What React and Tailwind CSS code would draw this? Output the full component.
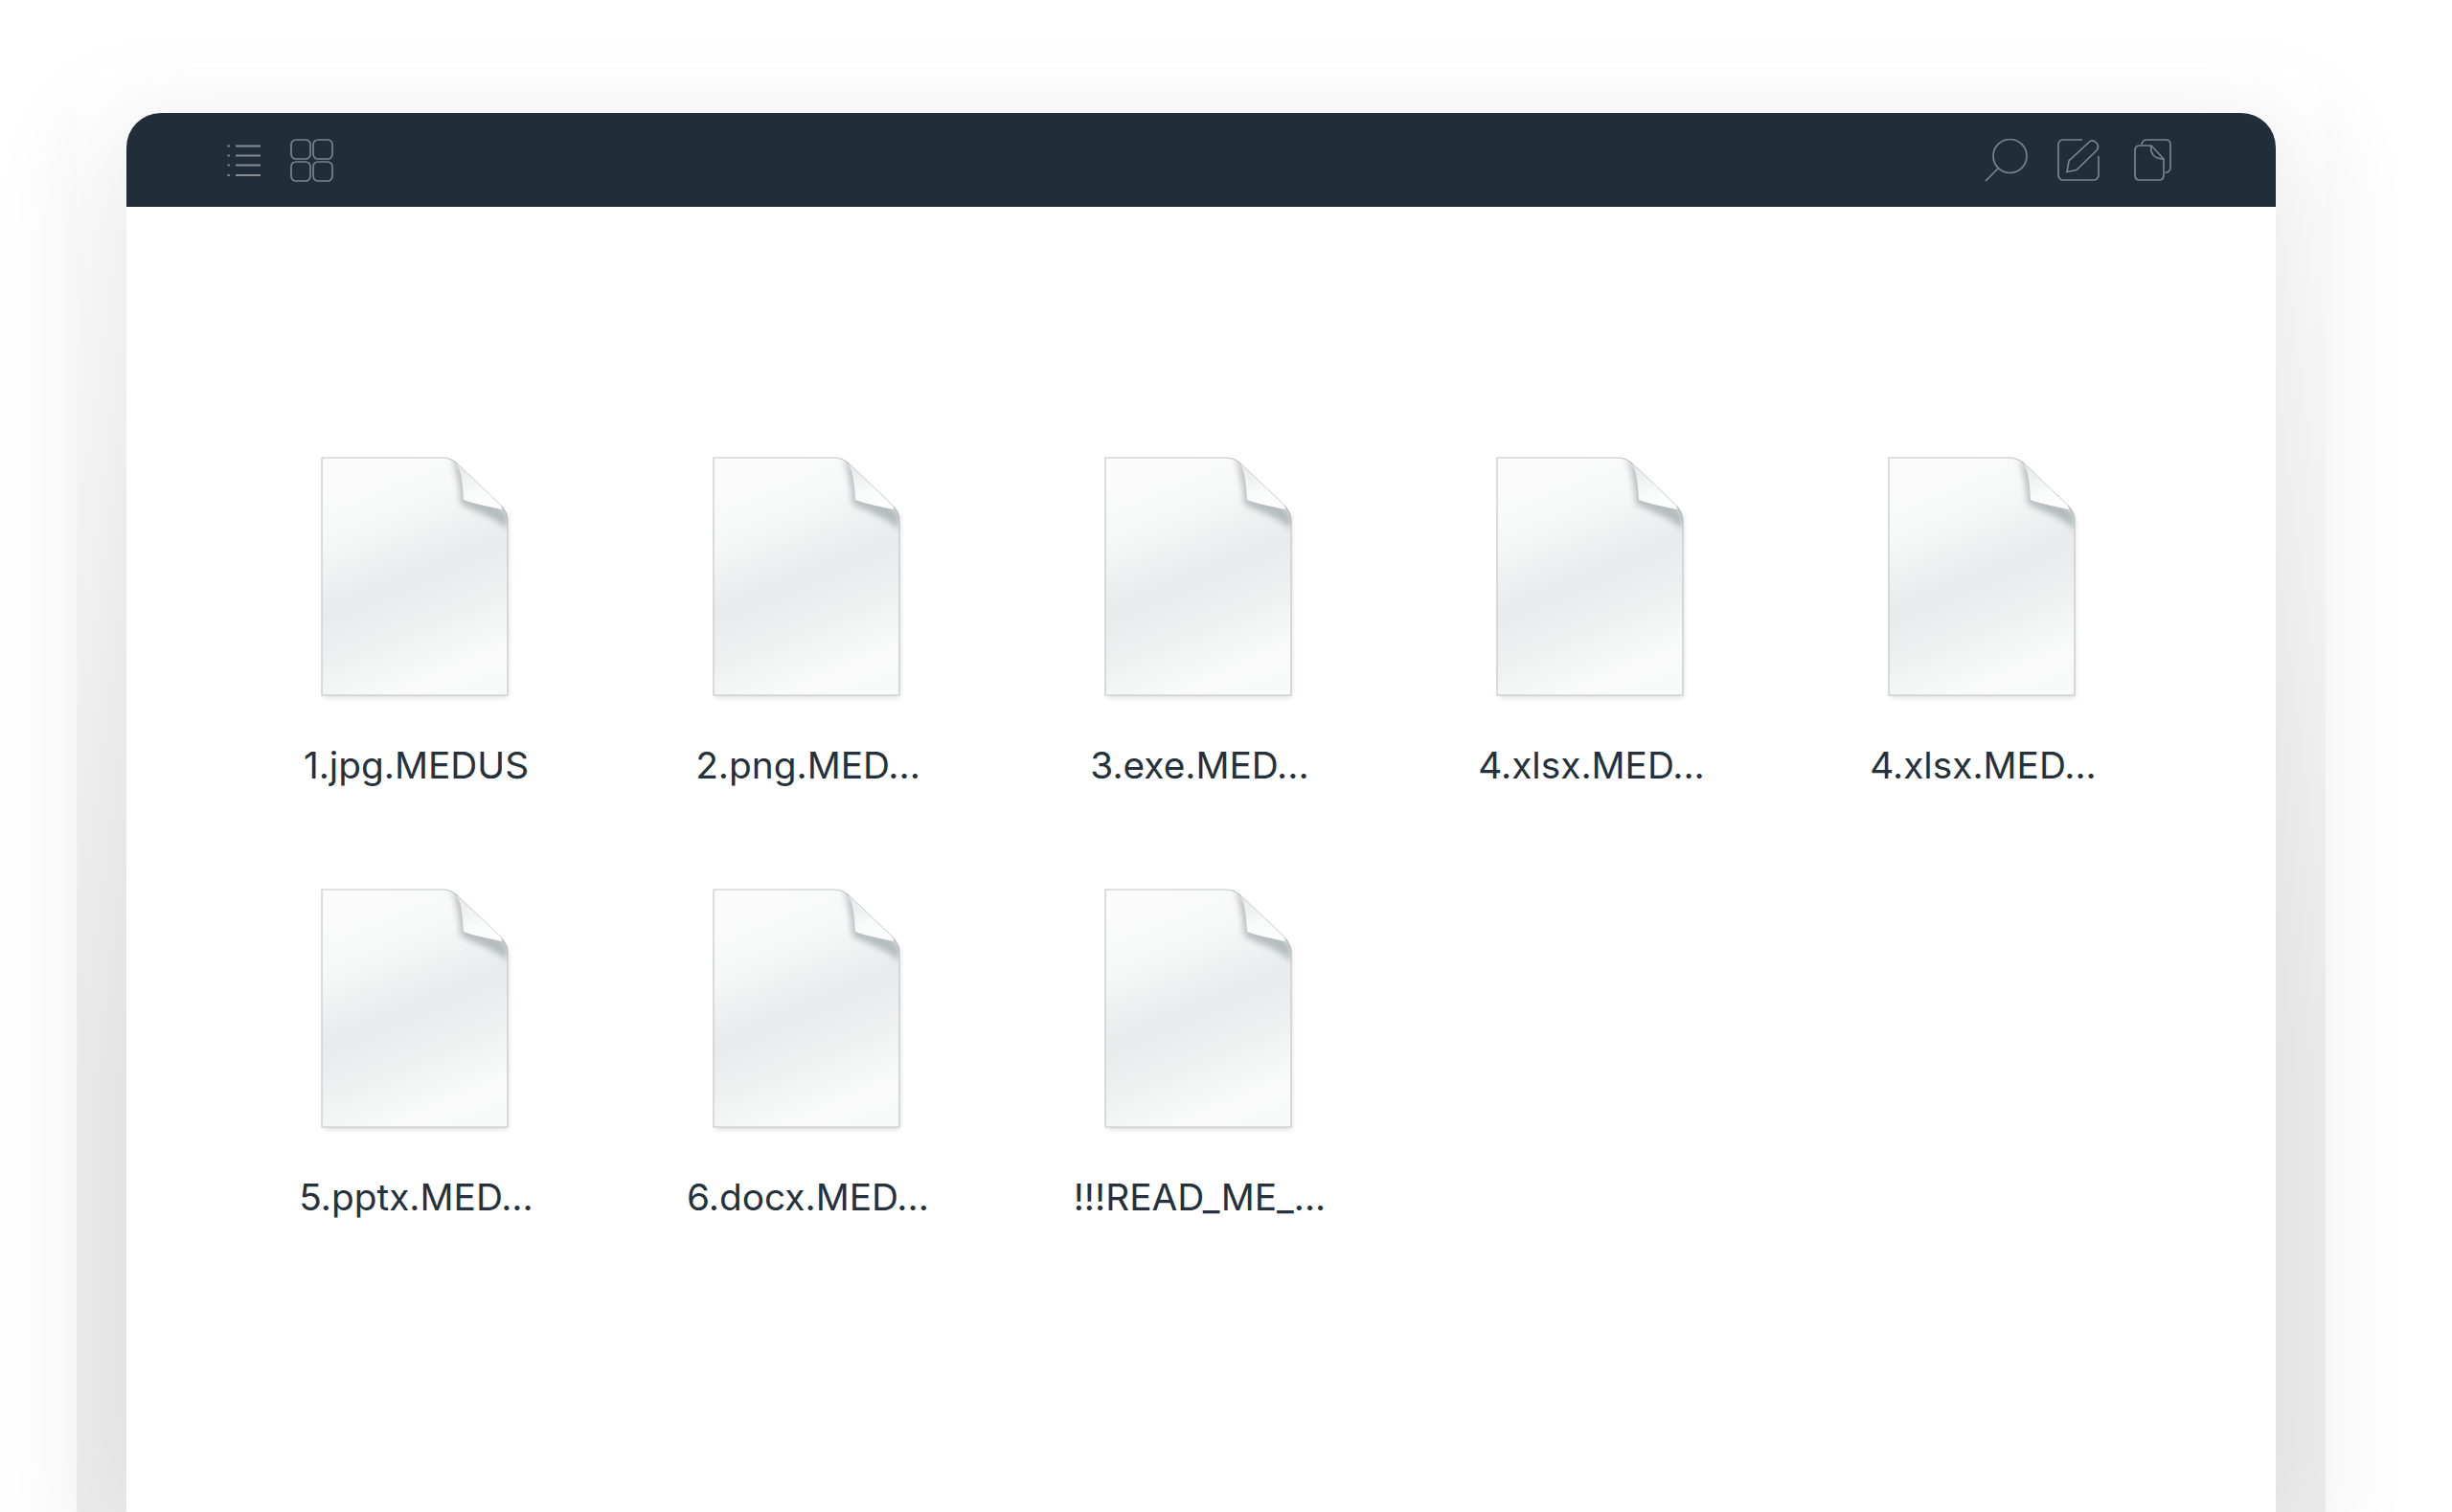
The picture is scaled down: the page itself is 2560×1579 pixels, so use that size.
import React from "react";

const files = ["1.jpg.MEDUS","2.png.MED...","3.exe.MED...","4.xlsx.MED...","4.xlsx.MED...","5.pptx.MED...","6.docx.MED...","!!!READ_ME_..."];

function Doc({ id }) {
  const page = "M1 1H128C134 1 139 4 143 8L187 50C192 55 195 60 195 66V249H1Z";
  return (
    <svg width="200" height="256" viewBox="0 0 200 256" className="block">
      <defs>
        <linearGradient id={`p${id}`} gradientUnits="userSpaceOnUse" x1="49" y1="9" x2="145" y2="241">
          <stop offset="0" stopColor="#fbfbfb" />
          <stop offset="0.25" stopColor="#f6f7f7" />
          <stop offset="0.5" stopColor="#e7ebeb" />
          <stop offset="0.7" stopColor="#eff1f1" />
          <stop offset="0.95" stopColor="#fbfbfb" />
          <stop offset="1" stopColor="#f8f9f9" />
        </linearGradient>
        <linearGradient id={`f${id}`} x1="0.3" y1="0" x2="0.7" y2="1">
          <stop offset="0" stopColor="#e8eaea" />
          <stop offset="0.55" stopColor="#f8f9f9" />
          <stop offset="1" stopColor="#ffffff" />
        </linearGradient>
        <clipPath id={`c${id}`}><path d={page} /></clipPath>
        <filter id={`b${id}`} x="-30%" y="-30%" width="160%" height="160%">
          <feGaussianBlur stdDeviation="3" />
        </filter>
      </defs>
      <path d="M3 60H195V251H3Z" fill="#000" opacity="0.16" filter={`url(#b${id})`} />
      <path d={page} fill={`url(#p${id})`} stroke="#c2c5c5" strokeWidth="1.1" />
      <g clipPath={`url(#c${id})`}>
        <path d="M136 1C142 14 145 32 146 49C158 57 178 60 195 76V60L140 4Z" fill="#8f999d" opacity="0.6" filter={`url(#b${id})`} />
      </g>
      <path d="M142 7L187 50C188 51 189 53 189 55C176 52 162 50 149 45C148 30 147 16 142 7Z" fill={`url(#f${id})`} />
    </svg>
  );
}

const stroke = { fill: "none", stroke: "#7a848b", strokeWidth: 1.7 };

export default function App() {
  return (
    <div className="h-[1579px] overflow-hidden bg-white pl-[80px] pr-[132px] pt-[66px] [font-family:Inter,sans-serif]">
      <div className="h-[1513px] overflow-hidden rounded-t-[52px] bg-[linear-gradient(to_bottom,#ffffff,#f8f8f8_12%,#eaeaea_70%)] pl-[52px] pr-[52px] pt-[52px] shadow-[0_50px_100px_rgba(0,0,0,0.07)]">
        <div className="h-full rounded-t-[36px] bg-white shadow-[0_0_90px_rgba(0,0,0,0.06)]">
          <header className="flex h-[98px] items-center justify-between rounded-t-[36px] bg-[#212d38] pl-[105px] pr-[109px]">
            <div className="flex items-center gap-[30px]">
              <svg width="36" height="45" viewBox="0 0 36 45" fill="none" stroke="#878d92" strokeWidth="2.2">
                <path d="M9 7.5H35M9 17.5H35M9 27.5H35M9 38H35" />
                <path d="M0.5 7.5H2.8M0.5 17.5H2.8M0.5 27.5H2.8M0.5 38H2.8" />
              </svg>
              <svg width="45" height="45" viewBox="0 0 45 45" {...stroke}>
                <rect x="1" y="1" width="20" height="20" rx="5" />
                <rect x="24" y="1" width="20" height="20" rx="5" />
                <rect x="1" y="24" width="20" height="20" rx="5" />
                <rect x="24" y="24" width="20" height="20" rx="5" />
              </svg>
            </div>
            <div className="flex items-center gap-[32px]">
              <svg width="45" height="45" viewBox="0 0 45 45" {...stroke}>
                <circle cx="26.5" cy="18" r="17.5" />
                <path d="M14 31L1 44" />
              </svg>
              <svg width="44" height="44" viewBox="0 0 44 44" {...stroke} className="ml-[-1px]">
                <path d="M26 1H6a5 5 0 0 0-5 5v32a5 5 0 0 0 5 5h32a5 5 0 0 0 5-5V18" />
                <path d="M10 34.5L12 23L33 3.5C35 1.5 38 1.5 40.5 4S43 9.5 41 12L20 32.5Z" />
              </svg>
              <svg width="39" height="44" viewBox="0 0 39 44" {...stroke} className="ml-[4px]">
                <path d="M8 6C8.5 3 10.5 1 13 1H33C36 1 38 3 38 6V30C38 33 36 35 32.5 35.5" />
                <path d="M18 7H6C3 7 1 9 1 12V38C1 41 3 43 6 43H26C29 43 31 41 31 38V21L18 7Z" />
                <path d="M18 7C17 11 18 14 20 17C23 20 27 21 31 21" />
              </svg>
            </div>
          </header>
          <main className="grid grid-cols-[repeat(5,409px)] gap-y-[105px] pl-[98px] pt-[261px]">
            {files.map((name, i) => (
              <div key={i} className="flex flex-col items-center">
                <div className="mr-[3px] h-[250px] w-[196px]"><Doc id={i} /></div>
                <span className="mt-[47px] text-[38.8px] leading-[49px] whitespace-nowrap text-[#25313c]">{name}</span>
              </div>
            ))}
          </main>
        </div>
      </div>
    </div>
  );
}
